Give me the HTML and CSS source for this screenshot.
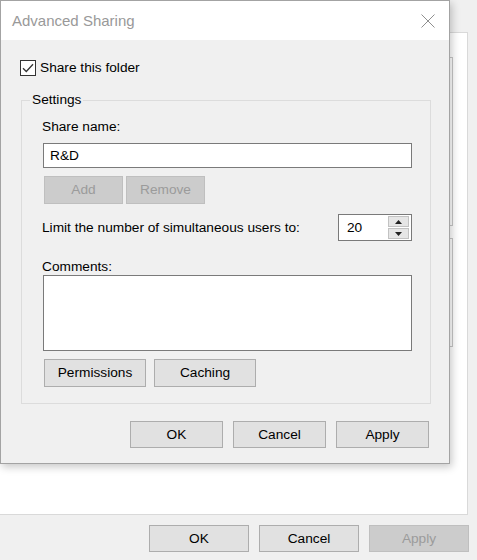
FILE: index.html
```html
<!DOCTYPE html>
<html>
<head>
<meta charset="utf-8">
<link rel="stylesheet" href="styles.css">
</head>
<body>
<div class="screen">
  <div class="bgwin">
    <div class="sheet">
      <div class="ghost ghost-a"></div>
      <div class="ghost ghost-b"></div>
    </div>
    <div class="footer">
      <div class="btn wide">OK</div>
      <div class="btn wide">Cancel</div>
      <div class="btn wide disabled">Apply</div>
    </div>
  </div>

  <div class="dialog">
    <div class="titlebar">
      <span class="title">Advanced Sharing</span>
      <svg class="close" width="14" height="14" viewBox="0 0 14 14"><path d="M0.5 0.5 L13.5 13.5 M13.5 0.5 L0.5 13.5" stroke="#8f8f8f" stroke-width="1" fill="none"/></svg>
    </div>
    <div class="dlg-body">
      <div class="check-row">
        <span class="checkbox"><svg width="14" height="14" viewBox="0 0 14 14"><path d="M2 7.2 L5.3 10.5 L12 3.2" stroke="#333" stroke-width="1.3" fill="none"/></svg></span>
        <span class="check-label">Share this folder</span>
      </div>

      <div class="group">
        <span class="group-label">Settings</span>
        <div class="label">Share name:</div>
        <div class="textbox">R&amp;D</div>
        <div class="btn-row small">
          <div class="btn disabled narrow">Add</div>
          <div class="btn disabled narrow">Remove</div>
        </div>
        <div class="limit-row">
          <span class="label">Limit the number of simultaneous users to:</span>
          <div class="spin">
            <span class="spin-value">20</span>
            <div class="spin-btns">
              <div class="spin-btn"><svg width="7" height="4" viewBox="0 0 7 4"><path d="M0 4 L3.5 0 L7 4 Z" fill="#222"/></svg></div>
              <div class="spin-btn"><svg width="7" height="4" viewBox="0 0 7 4"><path d="M0 0 L3.5 4 L7 0 Z" fill="#222"/></svg></div>
            </div>
          </div>
        </div>
        <div class="label comments">Comments:</div>
        <div class="textarea"></div>
        <div class="btn-row perm">
          <div class="btn medium">Permissions</div>
          <div class="btn medium">Caching</div>
        </div>
      </div>

      <div class="dlg-buttons">
        <div class="btn dlg">OK</div>
        <div class="btn dlg">Cancel</div>
        <div class="btn dlg">Apply</div>
      </div>
    </div>
  </div>
</div>
</body>
</html>
```

FILE: styles.css
```css
* { box-sizing: border-box; }

html, body {
  margin: 0;
  padding: 0;
}

body {
  background: #f0f0f0;
  font-family: "Liberation Sans", Arial, sans-serif;
  font-size: 13.7px;
  color: #000;
  width: 477px;
  height: 560px;
  overflow: hidden;
}

.screen {
  position: relative;
  width: 477px;
  height: 560px;
}

/* background properties window */
.bgwin {
  padding-top: 32px;
}

.sheet {
  width: 468px;
  height: 483px;
  background: #fff;
  border: 1px solid #d9d9d9;
  border-left: none;
  overflow: hidden;
}

.ghost {
  margin-left: 12px;
  width: 441px;
  border: 1px solid #c8c8c8;
}

.ghost-a {
  margin-top: 24px;
  height: 169px;
}

.ghost-b {
  margin-top: 12px;
  height: 109px;
}

.footer {
  display: flex;
  justify-content: flex-end;
  gap: 10px;
  padding: 10px 8px 0 0;
}

/* buttons */
.btn {
  display: flex;
  align-items: center;
  justify-content: center;
  background: #e1e1e1;
  border: 1px solid #adadad;
  height: 27px;
  color: #000;
  line-height: 1;
}

.btn.disabled {
  background: #cccccc;
  border-color: #bfbfbf;
  color: #9b9b9b;
}

.btn.wide { width: 100px; }
.btn.narrow { width: 79px; height: 28px; }
.btn.medium { width: 102px; height: 28px; }
.btn.dlg { width: 93px; }

/* dialog */
.dialog {
  position: absolute;
  left: 0;
  top: 0;
  width: 450px;
  height: 464px;
  border: 1px solid #a3a3a3;
  background: #f0f0f0;
  box-shadow: 2px 3px 8px rgba(0, 0, 0, 0.22);
  display: flex;
  flex-direction: column;
}

.titlebar {
  height: 39px;
  background: #fff;
  display: flex;
  align-items: center;
  justify-content: space-between;
  padding: 0 14px 0 11px;
}

.title {
  font-size: 15px;
  color: #999;
}

.close {
  display: block;
  margin-top: 1px;
}

.dlg-body {
  flex: 1;
}

.check-row {
  display: flex;
  align-items: center;
  margin: 20px 0 0 19px;
  height: 16px;
}

.checkbox {
  width: 16px;
  height: 16px;
  border: 1px solid #333;
  background: #fff;
  display: flex;
  align-items: center;
  justify-content: center;
  margin-right: 4px;
}

.checkbox svg { display: block; }

.check-label {
  line-height: 16px;
}

.group {
  position: relative;
  margin: 24px 0 0 20px;
  width: 410px;
  height: 304px;
  border: 1px solid #dcdcdc;
  padding: 17px 0 0 20px;
}

.group-label {
  position: absolute;
  top: -10px;
  left: 8px;
  padding: 0 2px;
  background: #f0f0f0;
  line-height: 18px;
}

.label {
  line-height: 18px;
}

.textbox {
  margin: 7px 0 0 1px;
  width: 369px;
  height: 25px;
  border: 1px solid #7a7a7a;
  background: #fff;
  padding-left: 6px;
  line-height: 23px;
}

.btn-row {
  display: flex;
  margin-left: 2px;
}

.btn-row.small {
  margin-top: 8px;
  gap: 3px;
}

.limit-row {
  margin-top: 10px;
  width: 370px;
  display: flex;
  align-items: center;
  justify-content: space-between;
}

.spin {
  width: 74px;
  height: 27px;
  border: 1px solid #7a7a7a;
  background: #fff;
  display: flex;
  align-items: stretch;
}

.spin-value {
  flex: 1;
  padding-left: 8px;
  line-height: 25px;
}

.spin-btns {
  display: flex;
  flex-direction: column;
  gap: 1px;
  padding: 1px 2px 1px 0;
}

.spin-btn {
  width: 21px;
  flex: 1;
  background: #e6e6e6;
  border: 1px solid #c2c2c2;
  display: flex;
  align-items: center;
  justify-content: center;
}

.spin-btn svg { display: block; }

.label.comments {
  margin-top: 17px;
  line-height: 17px;
}

.textarea {
  margin-left: 1px;
  width: 369px;
  height: 76px;
  border: 1px solid #7a7a7a;
  background: #fff;
}

.btn-row.perm {
  margin-top: 8px;
  gap: 8px;
}

.dlg-buttons {
  display: flex;
  justify-content: flex-end;
  gap: 10px;
  margin-top: 17px;
  padding-right: 20px;
}
```
